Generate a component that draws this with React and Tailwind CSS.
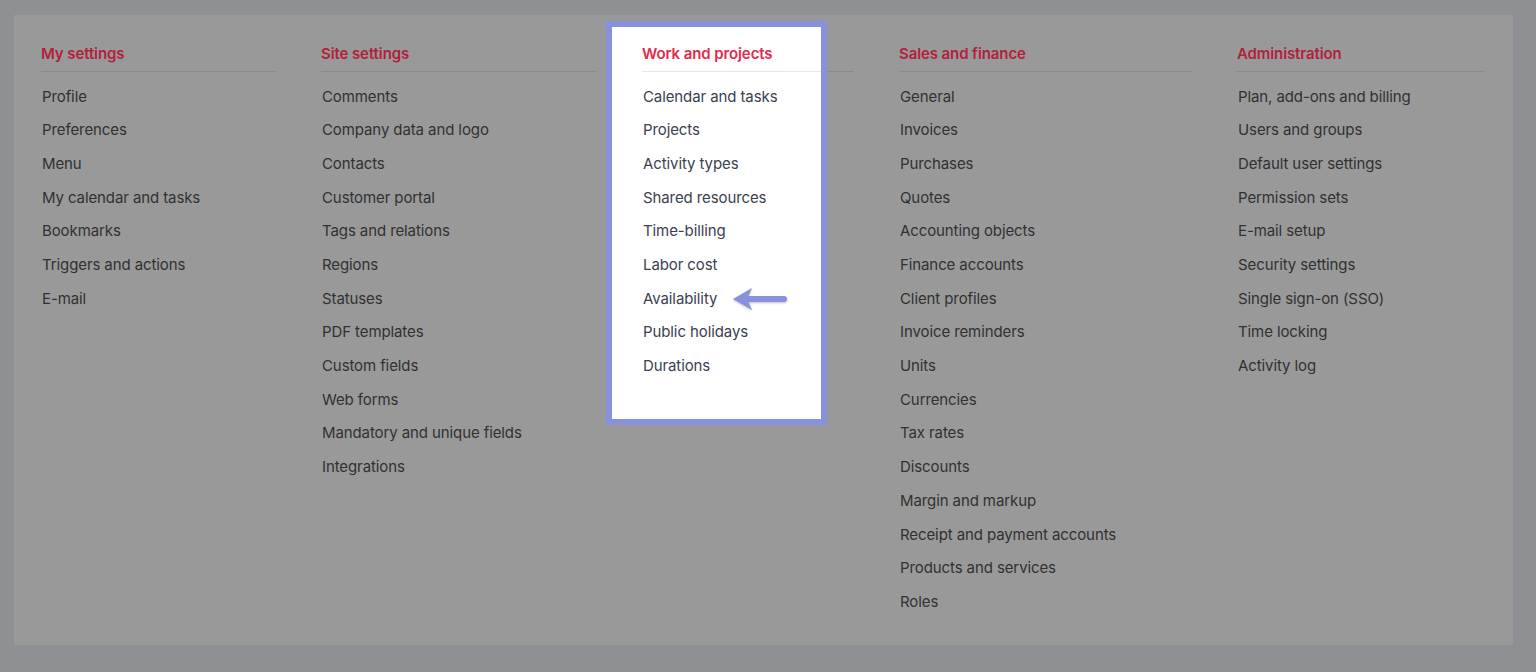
import React from 'react';

const columns = [
  {
    title: 'My settings',
    width: 'w-[235px]',
    items: ['Profile', 'Preferences', 'Menu', 'My calendar and tasks', 'Bookmarks', 'Triggers and actions', 'E-mail'],
  },
  {
    title: 'Site settings',
    width: 'w-[276px]',
    items: [
      'Comments',
      'Company data and logo',
      'Contacts',
      'Customer portal',
      'Tags and relations',
      'Regions',
      'Statuses',
      'PDF templates',
      'Custom fields',
      'Web forms',
      'Mandatory and unique fields',
      'Integrations',
    ],
  },
  {
    title: 'Work and projects',
    width: 'w-[212px]',
    highlight: true,
    items: [
      'Calendar and tasks',
      'Projects',
      'Activity types',
      'Shared resources',
      'Time-billing',
      'Labor cost',
      'Availability',
      'Public holidays',
      'Durations',
    ],
  },
  {
    title: 'Sales and finance',
    width: 'w-[293px]',
    items: [
      'General',
      'Invoices',
      'Purchases',
      'Quotes',
      'Accounting objects',
      'Finance accounts',
      'Client profiles',
      'Invoice reminders',
      'Units',
      'Currencies',
      'Tax rates',
      'Discounts',
      'Margin and markup',
      'Receipt and payment accounts',
      'Products and services',
      'Roles',
    ],
  },
  {
    title: 'Administration',
    width: 'w-[248px]',
    items: [
      'Plan, add-ons and billing',
      'Users and groups',
      'Default user settings',
      'Permission sets',
      'E-mail setup',
      'Security settings',
      'Single sign-on (SSO)',
      'Time locking',
      'Activity log',
    ],
  },
];

// Arrow pointing at the highlighted entry
function PointerArrow() {
  return (
    <svg width="58" height="28" viewBox="0 0 58 28" className="ml-[14px] drop-shadow-[0_1px_1px_rgba(0,0,0,0.25)]">
      <path d="M2 14 L21 3 L17.5 11 L53 11 Q56 11 56 14 Q56 17 53 17 L17.5 17 L21 25 Z" fill="#8891dd" />
    </svg>
  );
}

function Column({ col }) {
  const hl = col.highlight;
  return (
    <div className={`${col.width} shrink-0 relative`}>
      {hl && (
        <div className="absolute left-[-36px] top-[-23px] w-[221px] h-[404px] border-[6px] border-[#8891dd] bg-white" />
      )}
      <div className="relative tracking-[-0.1px]">
        <div
          className={`h-[20px] leading-[20px] text-[15px] font-semibold ${hl ? 'text-[#e5294a]' : 'text-[#b31f3b]'}`}
        >
          {col.title}
        </div>
        {hl ? (
          <div className="flex mt-[7px] h-[1px]">
            <div className="w-[179px] bg-[#e7e8ee]" />
            <div className="w-[6px]" />
            <div className="flex-1 bg-[#8a8a8a]" />
          </div>
        ) : (
          <div className="mt-[7px] h-[1px] bg-[#8a8a8a]" />
        )}
        <ul className="mt-[8px] pl-[1px]">
          {col.items.map((item) => (
            <li
              key={item}
              className={`h-[33.7px] flex items-center text-[15px] ${hl ? 'text-[#3b4150]' : 'text-[#313131]'}`}
            >
              <span>{item}</span>
              {hl && item === 'Availability' && <PointerArrow />}
            </li>
          ))}
        </ul>
      </div>
    </div>
  );
}

export default function App() {
  return (
    <div
      className="w-[1536px] h-[672px] bg-[#8f9094] pt-[15px] pl-[14px] overflow-hidden"
      style={{ fontFamily: 'Inter, "Noto Sans", sans-serif' }}
    >
      <div className="w-[1499px] h-[630px] bg-[#999999] pt-[29px] pl-[27px] flex gap-[45px]">
        {columns.map((col) => (
          <Column key={col.title} col={col} />
        ))}
      </div>
    </div>
  );
}
